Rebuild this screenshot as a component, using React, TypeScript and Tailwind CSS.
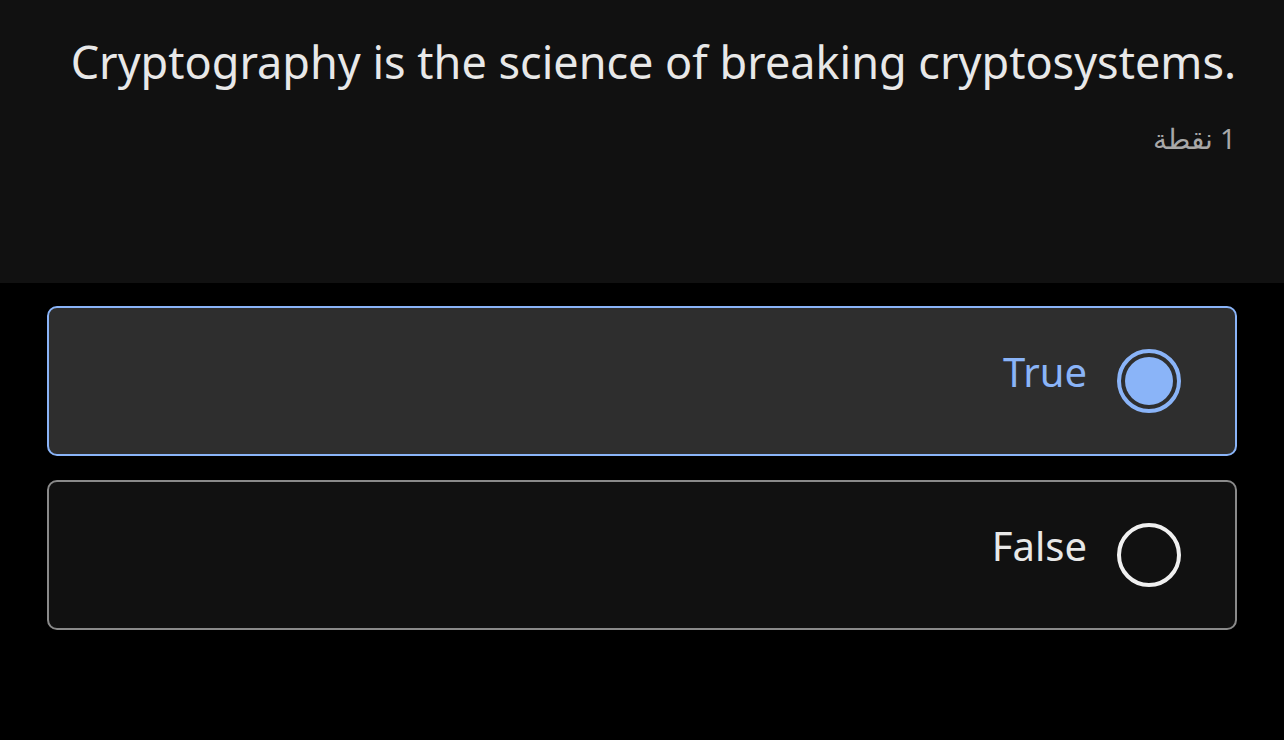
import React, { useState } from 'react';

const options = ['True', 'False'];

const App: React.FC = () => {
  const [selected, setSelected] = useState<string>('True');

  return (
    <div
      className="min-h-screen w-full bg-black text-white"
      style={{ fontFamily: '"Noto Sans", "Open Sans", sans-serif' }}
    >
      <header className="h-[283px] bg-[#111111] pl-[50px] pr-[48px] pt-[30px] text-right">
        <h1 className="text-[45px] leading-[64px] text-[#e8e8e8]">
          Cryptography is the science of breaking cryptosystems.
        </h1>
        <p dir="rtl" className="mt-[26px] text-[28px] leading-[36px] text-[#a8a8a8]">
          1 نقطة
        </p>
      </header>

      <div className="flex flex-col gap-[24px] px-[47px] pt-[23px]">
        {options.map((opt) => {
          const active = selected === opt;
          return (
            <button
              key={opt}
              onClick={() => setSelected(opt)}
              className={
                active
                  ? 'flex h-[150px] items-center justify-end gap-[30px] rounded-[10px] border-2 border-[#8ab4f8] bg-[#2e2e2e] pr-[54px]'
                  : 'flex h-[150px] items-center justify-end gap-[30px] rounded-[10px] border-2 border-[#8a8a8a] bg-[#111111] pr-[54px]'
              }
            >
              <span
                className={
                  active
                    ? 'mb-[18px] text-[40px] leading-none text-[#8ab4f8]'
                    : 'mb-[18px] text-[40px] leading-none text-[#e8e8e8]'
                }
              >
                {opt}
              </span>
              {active ? (
                <span className="flex h-[64px] w-[64px] items-center justify-center rounded-full border-[4px] border-[#8ab4f8]">
                  <span className="h-[48px] w-[48px] rounded-full bg-[#8ab4f8]" />
                </span>
              ) : (
                <span className="h-[64px] w-[64px] rounded-full border-[4px] border-[#f0f0f0]" />
              )}
            </button>
          );
        })}
      </div>
    </div>
  );
};

export default App;
